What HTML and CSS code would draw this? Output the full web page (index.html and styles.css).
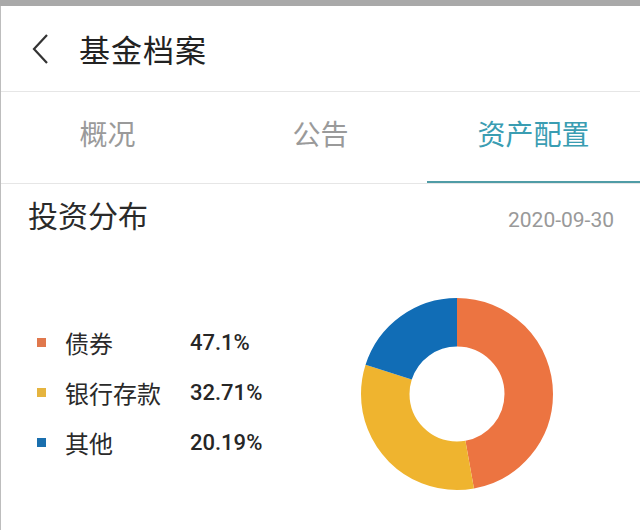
FILE: index.html
```html
<!DOCTYPE html>
<html lang="zh-CN">
<head>
    <meta charset="UTF-8">
    <meta name="viewport" content="width=device-width, initial-scale=1.0">
    <title>基金档案</title>
    <link rel="stylesheet" href="styles.css">
</head>
<body>

<div class="statusbar"></div>

<div class="page">
    <header class="topbar">
        <svg class="back" width="20" height="32" viewBox="0 0 20 32">
            <path d="M17 2 L4 16 L17 30" fill="none" stroke="#333" stroke-width="2.2" stroke-linejoin="miter"/>
        </svg>
        <h1>基金档案</h1>
    </header>

    <nav class="tabs">
        <div class="tab">概况</div>
        <div class="tab">公告</div>
        <div class="tab active">资产配置</div>
    </nav>

    <section class="assets">
        <div class="section-head">
            <h2>投资分布</h2>
            <span class="date">2020-09-30</span>
        </div>

        <div class="chart-row">
            <ul class="legend">
                <li><i class="dot bond"></i><span class="name">债券</span><span class="value">47.1%</span></li>
                <li><i class="dot deposit"></i><span class="name">银行存款</span><span class="value">32.71%</span></li>
                <li><i class="dot other"></i><span class="name">其他</span><span class="value">20.19%</span></li>
            </ul>

            <!-- donut: r=71.75, circumference 450.8 -->
            <svg class="donut" width="192" height="192" viewBox="0 0 192 192">
                <g transform="rotate(-90 96 96)">
                    <circle cx="96" cy="96" r="71.75" fill="none" stroke="#ec7441" stroke-width="48.5"
                            stroke-dasharray="212.3 450.8" stroke-dashoffset="0"/>
                    <circle cx="96" cy="96" r="71.75" fill="none" stroke="#efb42f" stroke-width="48.5"
                            stroke-dasharray="147.5 450.8" stroke-dashoffset="-212.3"/>
                    <circle cx="96" cy="96" r="71.75" fill="none" stroke="#116db6" stroke-width="48.5"
                            stroke-dasharray="91 450.8" stroke-dashoffset="-359.8"/>
                </g>
            </svg>
        </div>
    </section>
</div>

</body>
</html>
```

FILE: styles.css
```css
body {
    margin: 0;
    padding: 0;
    background: #fff;
    font-family: Roboto, "Noto Sans CJK SC", sans-serif;
    color: #222;
}
.statusbar {
    height: 6px;
    background: #a9a9a9;
}
.page {
    border-left: 1px solid #bdbdbd;
    min-height: 524px;
}
.topbar {
    height: 85px;
    display: flex;
    align-items: center;
    padding-left: 29px;
    border-bottom: 1px solid #e6e6e6;
}
.topbar .back {
    display: block;
}
.topbar h1 {
    margin: 0 0 0 29px;
    font-size: 31px;
    font-weight: 400;
    color: #222;
    letter-spacing: 1px;
}
.tabs {
    display: flex;
    height: 91px;
    border-bottom: 1px solid #e6e6e6;
}
.tab {
    flex: 1;
    display: flex;
    align-items: center;
    justify-content: center;
    padding-bottom: 7px;
    border-bottom: 2px solid transparent;
    font-size: 28px;
    color: #9a9a9a;
}
.tab.active {
    color: #3a9db2;
    border-bottom-color: #4f9ca6;
}
.assets {
    padding: 12px 26px 0 27px;
}
.section-head {
    display: flex;
    justify-content: space-between;
    align-items: baseline;
    height: 42px;
}
.section-head h2 {
    margin: 0;
    font-size: 30px;
    line-height: 42px;
    font-weight: 400;
    color: #2a2a2a;
}
.date {
    font-size: 21px;
    color: #999;
}
.chart-row {
    display: flex;
    align-items: center;
    margin-top: 56px;
}
.legend {
    list-style: none;
    margin: 0;
    padding: 0 0 0 9px;
    width: 324px;
}
.legend li {
    display: flex;
    align-items: center;
    height: 50px;
}
.dot {
    width: 9px;
    height: 9px;
    margin-right: 19px;
}
.dot.bond { background: #e0784d; }
.dot.deposit { background: #e5b43f; }
.dot.other { background: #1a6fae; }
.name {
    width: 125px;
    font-size: 24px;
    color: #2a2a2a;
}
.value {
    font-size: 22px;
    font-weight: 500;
    color: #262626;
}
.donut {
    display: block;
    margin-top: 4px;
}
```
